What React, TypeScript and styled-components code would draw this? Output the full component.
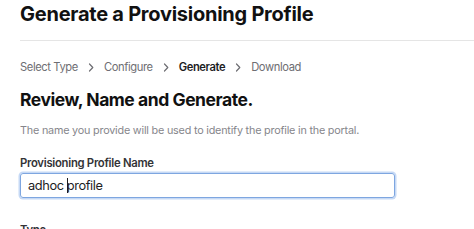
import React from 'react'
import styled, { createGlobalStyle } from 'styled-components'

const GlobalStyle = createGlobalStyle`
    html, body {
        margin: 0;
        padding: 0;
        background: #ffffff;
        overflow: hidden;
    }
    body {
        font-family: Inter, "Liberation Sans", sans-serif;
        color: #1d1d1f;
    }
`

const Page = styled.div`
    width: 474px;
    height: 229px;
    padding-left: 20px;
    box-sizing: border-box;
    overflow: hidden;
`

const Title = styled.h1`
    margin: 0;
    padding-top: 1px;
    height: 39px;
    font-size: 20px;
    font-weight: 700;
    letter-spacing: -0.25px;
    line-height: 26px;
    color: #111;
    border-bottom: 1px solid #e5e5e5;
`

const Crumbs = styled.nav`
    display: flex;
    align-items: center;
    gap: 9px;
    margin-top: 17px;
    font-size: 11.2px;
    letter-spacing: -0.4px;
    line-height: 18px;
    color: #6e6e73;
`

const Crumb = styled.span<{ $active?: boolean }>`
    color: ${({ $active }) => ($active ? '#1d1d1f' : '#6e6e73')};
    font-weight: ${({ $active }) => ($active ? 600 : 400)};
`

const Chevron = styled.svg`
    width: 6px;
    height: 9px;
    margin: 0 1px;
`

const Heading = styled.h2`
    margin: 12px 0 0;
    font-size: 17.5px;
    font-weight: 700;
    letter-spacing: -0.45px;
    line-height: 24px;
    color: #111;
`

const Hint = styled.p`
    margin: 11px 0 0;
    font-size: 10.8px;
    letter-spacing: -0.2px;
    line-height: 16px;
    color: #86868b;
`

const Label = styled.div`
    margin-top: 16px;
    font-size: 11.3px;
    font-weight: 600;
    letter-spacing: -0.28px;
    line-height: 16px;
    color: #333336;
`

const Field = styled.div`
    box-sizing: border-box;
    width: 375px;
    height: 25px;
    margin-top: 2px;
    padding: 0 7px;
    display: flex;
    align-items: center;
    border: 1px solid #7ea6e0;
    border-radius: 3px;
    box-shadow: 0 0 0 1.5px #c6d9f5;
    font-size: 12.8px;
    letter-spacing: -0.4px;
    color: #1d1d1f;
`

const Caret = styled.span`
    display: inline-block;
    width: 1px;
    height: 15px;
    background: #1d1d1f;
    margin-right: -1px;
`

const NextLabel = styled.div`
    margin-top: 24px;
    font-size: 11.3px;
    font-weight: 600;
    letter-spacing: -0.28px;
    line-height: 16px;
    color: #333336;
`

const Arrow = () => (
    <Chevron viewBox="0 0 6 9">
        <path d="M1.5 1 L4.8 4.5 L1.5 8" fill="none" stroke="#6e6e73" strokeWidth="1.2" strokeLinecap="round" strokeLinejoin="round" />
    </Chevron>
)

export default function App() {
    return (
        <Page>
            <GlobalStyle />
            <Title>Generate a Provisioning Profile</Title>
            <Crumbs>
                <Crumb>Select Type</Crumb>
                <Arrow />
                <Crumb>Configure</Crumb>
                <Arrow />
                <Crumb $active>Generate</Crumb>
                <Arrow />
                <Crumb>Download</Crumb>
            </Crumbs>
            <Heading>Review, Name and Generate.</Heading>
            <Hint>The name you provide will be used to identify the profile in the portal.</Hint>
            <Label>Provisioning Profile Name</Label>
            <Field>
                adhoc&nbsp;<Caret />profile
            </Field>
            <NextLabel>Type</NextLabel>
        </Page>
    )
}
